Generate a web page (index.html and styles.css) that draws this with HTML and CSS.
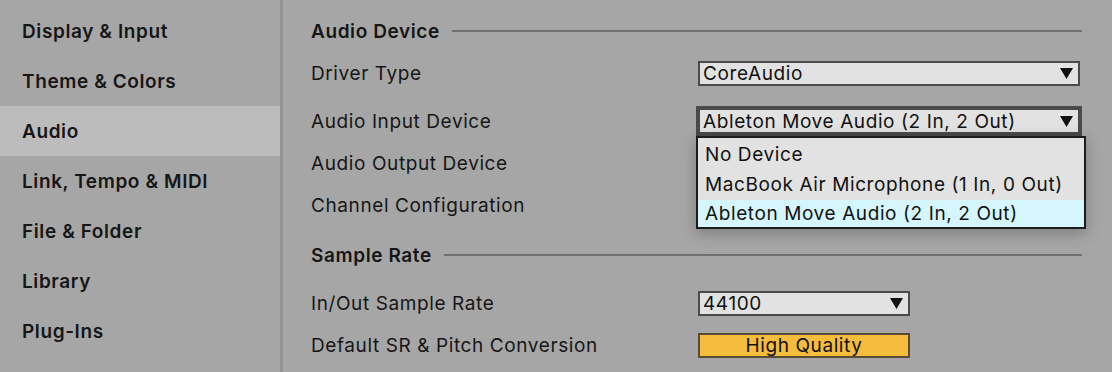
FILE: index.html
```html
<!DOCTYPE html>
<html>
<head>
<meta charset="utf-8">
<link rel="stylesheet" href="styles.css">
</head>
<body>
<div class="app">
  <nav class="sidebar">
    <div class="nav-item">Display &amp; Input</div>
    <div class="nav-item">Theme &amp; Colors</div>
    <div class="nav-item selected">Audio</div>
    <div class="nav-item">Link, Tempo &amp; MIDI</div>
    <div class="nav-item">File &amp; Folder</div>
    <div class="nav-item">Library</div>
    <div class="nav-item">Plug-Ins</div>
  </nav>
  <main class="pane">
    <div class="section-head"><span>Audio Device</span><div class="rule"></div></div>
    <div class="row">
      <div class="label">Driver Type</div>
      <div class="select wide"><span>CoreAudio</span><svg class="arrow" viewBox="0 0 12 10"><path d="M0 0H12L6 10Z"/></svg></div>
    </div>
    <div class="row gap">
      <div class="label">Audio Input Device</div>
      <div class="select wide focused"><span>Ableton Move Audio (2 In, 2 Out)</span><svg class="arrow" viewBox="0 0 12 10"><path d="M0 0H12L6 10Z"/></svg></div>
      <div class="popup">
        <div class="opt">No Device</div>
        <div class="opt">MacBook Air Microphone (1 In, 0 Out)</div>
        <div class="opt hl">Ableton Move Audio (2 In, 2 Out)</div>
      </div>
    </div>
    <div class="row">
      <div class="label">Audio Output Device</div>
    </div>
    <div class="row">
      <div class="label">Channel Configuration</div>
    </div>
    <div class="section-head sr"><span>Sample Rate</span><div class="rule"></div></div>
    <div class="row gap">
      <div class="label">In/Out Sample Rate</div>
      <div class="select narrow"><span>44100</span><svg class="arrow" viewBox="0 0 12 10"><path d="M0 0H12L6 10Z"/></svg></div>
    </div>
    <div class="row">
      <div class="label">Default SR &amp; Pitch Conversion</div>
      <div class="button">High Quality</div>
    </div>
  </main>
</div>
</body>
</html>
```
FILE: styles.css
```css
* { box-sizing: border-box; }
html, body { margin: 0; padding: 0; }
body {
  width: 1112px;
  height: 372px;
  overflow: hidden;
  background: #a6a6a6;
  font-family: Inter, "Noto Sans", sans-serif;
  font-size: 19px;
  letter-spacing: 0.6px;
  color: #161616;
}
.app { display: flex; height: 372px; }
.sidebar {
  width: 283px;
  flex: none;
  padding-top: 6px;
  background: #a6a6a6;
  border-right: 3px solid #949494;
}
.nav-item {
  height: 50px;
  display: flex;
  align-items: center;
  padding-left: 22px;
  font-weight: 600;
}
.nav-item.selected { background: #bcbcbc; }
.pane {
  flex: 1;
  padding: 10px 30px 0 28px;
  position: relative;
}
.section-head {
  height: 42px;
  display: flex;
  align-items: center;
  font-weight: 600;
}
.section-head .rule {
  flex: 1;
  height: 2px;
  background: #707070;
  margin-left: 12px;
}
.section-head.sr { margin-top: 8px; }
.row {
  height: 42px;
  display: flex;
  align-items: center;
  position: relative;
}
.row.gap { margin-top: 6px; }
.label { width: 387px; flex: none; }
.select {
  height: 25px;
  display: flex;
  align-items: center;
  justify-content: space-between;
  background: #e2e2e2;
  border: 2px solid #4a4a4a;
  padding: 0 4px 0 3px;
  color: #111;
}
.select.wide { width: 382px; }
.select.narrow { width: 212px; }
.select.focused {
  outline: 2px solid #4a4a4a;
  height: 26px;
}
.arrow { width: 13px; height: 11px; fill: #111; margin-right: 1px; flex: none; }
.popup {
  position: absolute;
  left: 385px;
  top: 36px;
  width: 390px;
  background: #e2e2e2;
  border: 2px solid #1c1c1c;
  box-shadow: 0 4px 14px rgba(0,0,0,0.25);
  padding-top: 1px;
  z-index: 2;
}
.opt {
  height: 30px;
  display: flex;
  align-items: center;
  padding-left: 7px;
  color: #111;
}
.opt.hl { background: #d5f6fc; height: 27px; margin-top: 1px; }
.button {
  width: 212px;
  height: 25px;
  background: #f5bc3e;
  border: 2px solid #5a4c32;
  display: flex;
  align-items: center;
  justify-content: center;
  color: #111;
}
```
